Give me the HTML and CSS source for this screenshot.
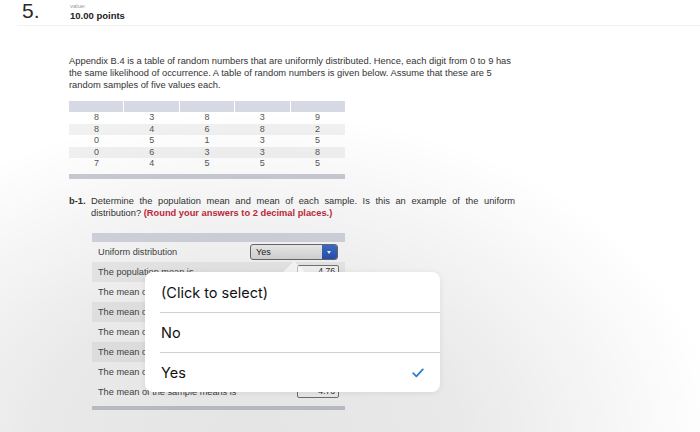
FILE: index.html
```html
<!DOCTYPE html>
<html lang="en">
<head>
<meta charset="utf-8">
<title>Question 5</title>
<link rel="stylesheet" href="styles.css">
</head>
<body>
<div class="page">
  <header class="qhead">
    <div class="qnum">5.</div>
    <div class="qval">
      <div class="vlabel">value:</div>
      <div class="vpts">10.00 points</div>
    </div>
  </header>

  <section class="qbody">
    <p class="intro">Appendix B.4 is a table of random numbers that are uniformly distributed. Hence, each digit from 0 to 9 has<br>the same likelihood of occurrence. A table of random numbers is given below. Assume that these are 5<br>random samples of five values each.</p>

    <div class="digits">
      <div class="dhead"><span></span><span></span><span></span><span></span><span></span></div>
      <div class="drow"><span>8</span><span>3</span><span>8</span><span>3</span><span>9</span></div>
      <div class="drow alt"><span>8</span><span>4</span><span>6</span><span>8</span><span>2</span></div>
      <div class="drow"><span>0</span><span>5</span><span>1</span><span>3</span><span>5</span></div>
      <div class="drow alt"><span>0</span><span>6</span><span>3</span><span>3</span><span>8</span></div>
      <div class="drow"><span>7</span><span>4</span><span>5</span><span>5</span><span>5</span></div>
      <div class="dfoot"></div>
    </div>

    <div class="task">
      <span class="tag">b-1.</span>
      <div class="ttext">
        <span class="tline">Determine the population mean and mean of each sample. Is this an example of the uniform</span>
        <span class="tlast">distribution? <b class="note">(Round your answers to 2 decimal places.)</b></span>
      </div>
    </div>

    <div class="answers">
      <div class="ahead"></div>
      <div class="arow">
        <span class="alabel">Uniform distribution</span>
        <span class="select"><span class="stext">Yes</span><span class="sbtn"></span></span>
      </div>
      <div class="arow alt"><span class="alabel">The population mean is</span><span class="field">4.76</span></div>
      <div class="arow"><span class="alabel">The mean of sample 1 is</span><span class="field">6.20</span></div>
      <div class="arow alt"><span class="alabel">The mean of sample 2 is</span><span class="field">5.00</span></div>
      <div class="arow"><span class="alabel">The mean of sample 3 is</span><span class="field">2.80</span></div>
      <div class="arow alt"><span class="alabel">The mean of sample 4 is</span><span class="field">4.40</span></div>
      <div class="arow"><span class="alabel">The mean of sample 5 is</span><span class="field">5.40</span></div>
      <div class="arow"><span class="alabel">The mean of the sample means is</span><span class="field">4.76</span></div>
      <div class="afoot"></div>
    </div>
  </section>
</div>

<!-- dimmed backdrop behind the open picker -->
<div class="dim"></div>

<!-- option picker for the "Uniform distribution" select -->
<div class="picker">
  <div class="caret"></div>
  <div class="opt"><span>(Click to select)</span></div>
  <div class="opt"><span>No</span></div>
  <div class="opt"><span>Yes</span>
    <svg class="check" width="12" height="10" viewBox="0 0 12 10"><path d="M1.2 5.2 L4.4 8.3 L10.8 1.4" fill="none" stroke="#2f7bd6" stroke-width="1.8" stroke-linecap="round" stroke-linejoin="round"/></svg>
  </div>
</div>
</body>
</html>
```

FILE: styles.css
```css
html, body {
  margin: 0;
  padding: 0;
  background: #fff;
}

body {
  width: 700px;
  height: 432px;
  overflow: hidden;
  position: relative;
  font-family: "Liberation Sans", Arial, sans-serif;
  color: #333;
}

/* question header */
.qhead {
  display: flex;
  align-items: flex-start;
  height: 25px;
  margin-left: 17px;
  padding-left: 5px;
  border-bottom: 1px solid #f2f2f2;
}

.qnum {
  width: 48px;
  font-size: 21px;
  line-height: 21px;
  color: #2a2a2a;
}

.qval {
  padding-top: 3px;
}

.vlabel {
  font-size: 6px;
  line-height: 7px;
  color: #999;
}

.vpts {
  font-size: 9.5px;
  line-height: 12px;
  font-weight: bold;
  color: #222;
}

/* question body */
.qbody {
  padding-left: 69px;
}

.intro {
  margin: 29px 0 0;
  font-size: 9.35px;
  line-height: 12px;
  color: #333;
}

/* random digits table */
.digits {
  width: 276px;
  margin-top: 10px;
}

.dhead {
  display: grid;
  grid-template-columns: repeat(5, 1fr);
  column-gap: 1px;
  height: 11px;
}

.dhead span {
  background: #d6d9e3;
}

.drow {
  display: grid;
  grid-template-columns: repeat(5, 1fr);
  height: 11.6px;
  font-size: 9px;
  line-height: 11.6px;
  color: #555;
  text-align: center;
}

.drow.alt {
  background: #f1f1f1;
}

.dfoot {
  height: 5px;
  margin-top: 4px;
  background: #c9ccd5;
}

/* b-1 prompt */
.task {
  display: flex;
  margin-top: 16px;
  font-size: 9.3px;
  line-height: 12px;
  color: #333;
}

.tag {
  width: 22px;
  font-weight: bold;
}

.ttext {
  width: 424px;
}

.tline {
  display: block;
  text-align: justify;
  text-align-last: justify;
}

.tlast {
  display: block;
}

.note {
  color: #c3293d;
}

/* answer table */
.answers {
  width: 253px;
  margin-top: 14px;
  margin-left: 23px;
}

.ahead {
  height: 9px;
  background: #d6d9e3;
}

.arow {
  display: flex;
  align-items: center;
  justify-content: space-between;
  height: 20px;
  padding: 0 6px 0 6px;
  font-size: 9.2px;
  color: #444;
}

.arow.alt {
  background: #f1f1f1;
}

.select {
  display: flex;
  align-items: stretch;
  width: 86px;
  height: 14px;
  margin-right: 1px;
  border: 1px solid #6a6a6a;
  border-radius: 3px;
  overflow: hidden;
  background: linear-gradient(#f4f4f4, #dcdcdc);
}

.stext {
  flex: 1;
  padding-left: 5px;
  font-size: 9px;
  line-height: 14px;
  color: #222;
}

.sbtn {
  position: relative;
  width: 15px;
  background: linear-gradient(#3f6fd0, #2852b0);
}

.sbtn::after {
  content: "";
  position: absolute;
  left: 5px;
  top: 6px;
  border-left: 2.5px solid transparent;
  border-right: 2.5px solid transparent;
  border-top: 3px solid #fff;
}

.field {
  width: 42px;
  height: 13px;
  box-sizing: border-box;
  border: 1px solid #777;
  border-radius: 2px;
  padding-right: 3px;
  text-align: right;
  font-size: 8.6px;
  line-height: 11px;
  color: #333;
  background: #fff;
}

.afoot {
  height: 4px;
  margin-top: 4px;
  background: #c9ccd5;
}

/* backdrop */
.dim {
  position: absolute;
  inset: 0;
  background: radial-gradient(ellipse 470px 330px at 250px 440px, rgba(0, 0, 0, 0.105) 0%, rgba(0, 0, 0, 0.085) 45%, rgba(0, 0, 0, 0) 100%);
}

/* picker popover */
.picker {
  position: absolute;
  left: 145px;
  top: 272px;
  width: 295px;
  height: 120px;
  background: #fff;
  border-radius: 8px;
  box-shadow: 0 1px 6px rgba(0, 0, 0, 0.08);
  font-family: Inter, "Noto Sans", sans-serif;
  color: #111;
}

.caret {
  position: absolute;
  left: 138px;
  top: -11px;
  width: 0;
  height: 0;
  border-left: 11px solid transparent;
  border-right: 11px solid transparent;
  border-bottom: 11px solid rgba(255, 255, 255, 0.55);
}

.opt {
  position: relative;
  display: flex;
  align-items: center;
  justify-content: space-between;
  height: 40px;
  margin-left: 15px;
  padding-left: 1px;
  padding-right: 16px;
  font-size: 14.5px;
}

.opt + .opt {
  border-top: 1px solid #cfcfcf;
  height: 39px;
}

.check {
  display: block;
}
```
